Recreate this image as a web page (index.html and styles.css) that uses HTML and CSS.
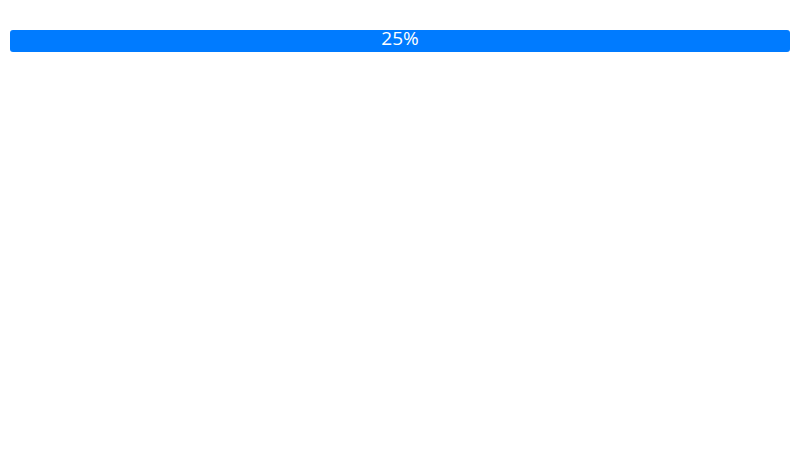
FILE: index.html
```html
<!DOCTYPE html>
<html>
<head>
<meta charset="utf-8">
<link rel="stylesheet" href="styles.css">
</head>
<body>
<div class="page">
  <div class="progress">
    <div class="progress-bar">25%</div>
  </div>
</div>
</body>
</html>
```
FILE: styles.css
```css
html, body { margin: 0; padding: 0; background: #fff; }
.page { padding: 30px 10px 0 10px; }
.progress {
  height: 22px;
  display: flex;
}
.progress-bar {
  width: 100%;
  height: 22px;
  border-radius: 3px;
  background: #007bff;
  color: #fff;
  font-family: "Open Sans", sans-serif;
  font-weight: 400;
  font-size: 19px;
  line-height: 17px;
  text-align: center;
}
```
